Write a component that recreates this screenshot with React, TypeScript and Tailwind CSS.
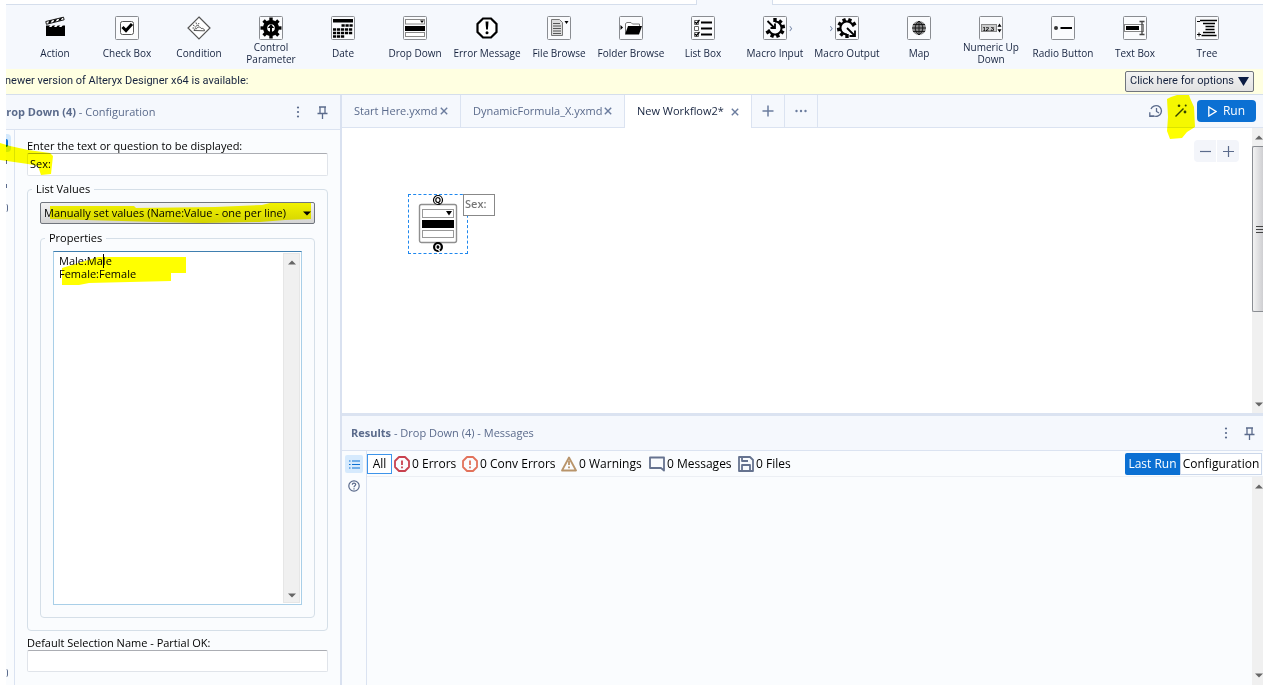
import React, { useState } from 'react';

const boxed = <rect x="0.5" y="0.5" width="23" height="23" rx="1" fill="#fafbfd" stroke="#8a8d92" />;

const teeth = (angles: number[], inner: number, outer: number) => angles.map(a => (
  <rect key={a} x={-1.7} y={-outer} width={3.4} height={outer - inner} transform={`translate(12 12) rotate(${a})`} fill="#000" />
));

const toolIcons: Record<string, React.ReactNode> = {
  action: <g>
      <path d="M3 11h19v9H3z" fill="#000" />
      <path d="M3 9.5h19v2H3z" fill="#000" />
      <path d="M2.8 5.5 20.5 1.2l.6 2.6L3.4 8.3z" fill="#fff" stroke="#000" strokeWidth="0.9" />
      <path d="m5 7.6 1.4-2.9 2.6-.6-1.4 2.8zM10 6.4l1.5-2.9 2.5-.6-1.4 2.8zM15.2 5.1l1.4-2.8 2.5-.6-1.4 2.8z" fill="#000" />
      <path d="m6 11 1.5-2h2.4l-1.5 2zm5 0 1.5-2h2.4l-1.5 2zm5 0 1.5-2h2.4l-1.5 2z" fill="#fff" />
    </g>,
  checkBox: <g>{boxed}<rect x="5.5" y="5.5" width="13" height="13" rx="2" fill="#fff" stroke="#555" /><path d="m7.5 11 3.500 3.500L17 8" fill="none" stroke="#000" strokeWidth="3" /></g>,
  condition: <g fill="none" stroke="#555">
      <path d="M12 1 23 12 12 23 1 12z" fill="#fff" strokeWidth="1.2" />
      <path d="M7 14.5c0-1.7 1.8-2 2.5-1.7.5-2.2 4-2.4 4.8-.3 2-.5 3.2.8 3.2 2.3z" />
      <path d="M8.5 11.5a2.4 2.4 0 0 1 3.3-2M6 9l1.5 1M9 6.5l.5 1.7M5.5 12h1.7M12 7l-.7 1.3" />
    </g>,
  control: <g>{boxed}{teeth([0, 45, 90, 135, 180, 225, 270, 315], 5, 10.5)}<circle cx="12" cy="12" r="8" fill="#000" /><circle cx="12" cy="12" r="3.8" fill="#fff" /><path d="m12 8-3.2 4h2.2v5h2v-5h2.2z" fill="#000" /></g>,
  date: <g>{boxed}<path d="M2 3h20v3.5H2z" fill="#000" /><path d="M10.5 9.5H22M2 13.5h20M2 17h20M2 20.500h12" stroke="#000" strokeWidth="2.6" strokeDasharray="3.2 0.8" /></g>,
  dropDown: <g>{boxed}<rect x="2.5" y="3.5" width="19" height="4.5" fill="#fff" stroke="#888" /><path d="M17 4.5h4L19 7z" /><path d="M2 10h20v5H2z" /><rect x="2.5" y="16.5" width="19" height="4" fill="#fff" stroke="#888" /></g>,
  error: <g><path d="M8 2.5h8L21.500 8v8L16 21.500H8L2.5 16V8z" fill="#fff" stroke="#000" strokeWidth="2.2" /><path d="M10.5 5.5h3l-.6 8h-1.8z" /><circle cx="12" cy="16.7" r="1.5" /></g>,
  fileBrowse: <g>{boxed}<path d="M4.5 3.5h8l3 3v13h-11z" fill="#ddd" stroke="#777" /><path d="M6 7.5h7M6 10h8M6 12.5h8M6 15h8M6 17.5h8" stroke="#555" /><path d="M17.5 5h4l-2 3z" /></g>,
  folderBrowse: <g>{boxed}<path d="M1.500 9v5L4 11.500z" /><path d="M6.5 17.5v-10l1.500-1h4L13.500 8h7v3" fill="#fff" stroke="#777" /><path d="M9 10h14l-3 8.500H6z" /></g>,
  listBox: <g>{boxed}<path d="M10 6.5h11M10 12.5h11M10 18.5h11" stroke="#000" strokeWidth="2" /><path d="M3.5 4.5h4v4h-4zM3.5 10.5h4v4h-4zM3.5 16.5h4v4h-4z" fill="#fff" stroke="#666" /><path d="m4 6 1.500 1.500L8.500 4M4 18l1.500 1.500L8.500 16" fill="none" stroke="#000" strokeWidth="1.2" /></g>,
  macroInput: <g>{boxed}{teeth([0, 40, 80, 120, 160, 200, 240], 6, 10)}<path d="M12 5.500a6.500 6.500 0 1 1-6.300 8" fill="none" stroke="#000" strokeWidth="2" /><path d="m4.500 5 7 7M12 7.500V12H7.500" fill="none" stroke="#000" strokeWidth="1.8" /></g>,
  macroOutput: <g>{boxed}{teeth([180, 220, 260, 300, 340, 20, 60], 6, 10)}<path d="M12 18.500a6.500 6.500 0 1 1 6.300-8" fill="none" stroke="#000" strokeWidth="2" /><path d="m12 12 7.500 7.500M20 14.500V20h-5.500" fill="none" stroke="#000" strokeWidth="1.8" /></g>,
  map: <g>{boxed}<circle cx="12" cy="12" r="7" fill="#888" /><path d="M12 5v14M5 12h14M6 8.500h12M6 15.500h12M12 5c-5 4-5 10 0 14M12 5c5 4 5 10 0 14" fill="none" stroke="#111" strokeWidth="0.9" /></g>,
  numeric: <g>{boxed}<rect x="2.5" y="8.5" width="15" height="7" fill="#ccc" stroke="#888" /><text x="3.5" y="14.5" fontSize="6" fontWeight="700" fontFamily="Liberation Sans, sans-serif">12.3</text><path d="m20.500 7.500-2 3.200h4zM20.500 16.500l-2-3.200h4z" /></g>,
  radio: <g>{boxed}<circle cx="5" cy="12" r="2" fill="#333" /><path d="M9.500 12H21" stroke="#000" strokeWidth="2" /></g>,
  textBox: <g>{boxed}<rect x="1.5" y="8.5" width="19" height="7" fill="#fff" stroke="#888" /><path d="M3 10h13v4H3z" /><path d="M16.500 5.500h5M16.500 18.500h5M19 5.500v13" stroke="#444" strokeWidth="1.3" /></g>,
  tree: <g>{boxed}<path d="M2 5.500h3M2 18.500h4M4 16.500v4" stroke="#000" /><path d="M5 4.500h17M8 7.500h12M10.500 10.500h9M10.500 13.500h9M8 16.500h12M6.500 19.500h15" stroke="#000" strokeWidth="1.6" /></g>
};

const tools = [
  { icon: 'action', label: 'Action' },
  { icon: 'checkBox', label: 'Check Box' },
  { icon: 'condition', label: 'Condition' },
  { icon: 'control', label: 'Control Parameter' },
  { icon: 'date', label: 'Date' },
  { icon: 'dropDown', label: 'Drop Down' },
  { icon: 'error', label: 'Error Message' },
  { icon: 'fileBrowse', label: 'File Browse' },
  { icon: 'folderBrowse', label: 'Folder Browse' },
  { icon: 'listBox', label: 'List Box' },
  { icon: 'macroInput', label: 'Macro Input' },
  { icon: 'macroOutput', label: 'Macro Output' },
  { icon: 'map', label: 'Map' },
  { icon: 'numeric', label: 'Numeric Up Down' },
  { icon: 'radio', label: 'Radio Button' },
  { icon: 'textBox', label: 'Text Box' },
  { icon: 'tree', label: 'Tree' }
];

const PinIcon = () => <svg width="11" height="13" viewBox="0 0 11 13" fill="none" stroke="#5b6b8c" strokeWidth="1.3">
    <path d="M2 1h7M3 1v6M8 1v6M.5 7.5h10M5.500 7.500V13" />
  </svg>;

const DotsIcon = () => <svg width="4" height="12" viewBox="0 0 4 12" fill="#5b6b8c">
    <circle cx="2" cy="1.5" r="1.1" /><circle cx="2" cy="6" r="1.1" /><circle cx="2" cy="10.5" r="1.1" />
  </svg>;

const CloseIcon = () => <svg width="8" height="8" viewBox="0 0 8 8" stroke="#6b7c9e" strokeWidth="1.4"><path d="m.8.8 6.400 6.400M7.200.8.8 7.200" /></svg>;

const Arrow = ({ down }: { down?: boolean }) => <svg width="8" height="5" viewBox="0 0 8 5" className="shrink-0" fill="#666">
    <path d={down ? 'M0 .5h8l-4 4z' : 'M0 4.500h8l-4-4z'} />
  </svg>;

const Toolbar = () => <div className="flex h-[64px] shrink-0 bg-[#f5f8fd] pt-[11px] pl-[13px]">
    {tools.map(tool => <button key={tool.icon} type="button" className="flex w-[72px] shrink-0 flex-col items-center">
        <span className="relative">
          <svg width="24" height="24" viewBox="0 0 24 24">{toolIcons[tool.icon]}</svg>
          {tool.icon === 'macroInput' && <span className="absolute top-1 left-[26px] text-[12px] leading-4 text-[#7a8bab]">›</span>}
          {tool.icon === 'macroOutput' && <span className="absolute top-1 right-[26px] text-[12px] leading-4 text-[#7a8bab]">›</span>}
        </span>
        <span className="flex h-[25px] items-center text-center text-[10px] leading-3 text-[#16233f]">
          <span className={tool.label.length > 14 ? 'w-[60px]' : 'whitespace-nowrap'}>{tool.label}</span>
        </span>
      </button>)}
  </div>;

const ConfigPanel = () => {
  const [question, setQuestion] = useState('Sex:');
  const [values, setValues] = useState('Male:Male\nFemale:Female');
  const [selection, setSelection] = useState('');

  return <section className="flex w-[336px] shrink-0 flex-col border-r-2 border-[#d9e1f0] bg-[#fafcfe]">
      <header className="flex h-[35px] shrink-0 items-center overflow-hidden border-b border-[#dbe3f1] bg-[#f5f8fd] pr-3 text-[11px] text-[#5b6b8c]">
        <h2 className="-ml-2 flex-1 whitespace-nowrap"><b>Drop Down (4)</b> - Configuration</h2>
        <button type="button" aria-label="More" className="mr-[17px]"><DotsIcon /></button>
        <button type="button" aria-label="Pin"><PinIcon /></button>
      </header>
      <div className="flex min-h-0 flex-1">
        <nav className="flex w-[9px] shrink-0 flex-col overflow-hidden border-r border-[#dbe3f1] pt-1 text-[#5b6b8c]">
          <span className="flex h-[18px] w-[5px] items-center rounded-r bg-[#d3e8fc]"><span className="h-2 w-[2px] rounded-r bg-[#0b70d3]" /></span>
          <span className="mt-2 h-1 w-px bg-[#5b6b8c]" />
          <span className="mt-5 h-1 w-px bg-[#5b6b8c]" />
          <span className="mt-4 h-2 w-[2px] rounded-r border-r border-[#5b6b8c]" />
          <span className="mt-auto mb-2 h-2 w-[2px] rounded-r border-r border-[#5b6b8c]" />
        </nav>
        <form className="flex min-w-0 flex-1 flex-col px-3 pt-2 pb-[13px] text-[11px] text-black">
          <label htmlFor="question" className="h-[15px] leading-4">Enter the text or question to be displayed:</label>
          <input id="question" value={question} onChange={e => setQuestion(e.target.value)} className="h-[23px] w-full rounded-xs border border-[#e0e4ea] border-t-[#abadb3] bg-white px-[2px] pb-[2px] outline-none" />
          <fieldset className="mt-[5px] flex min-h-0 flex-1 flex-col rounded border border-[#d5dfe8] px-3 pt-[5px] pb-3">
            <legend className="-ml-2 px-1 leading-4">List Values</legend>
            <div className="relative">
              <select aria-label="List Values" className="block h-[22px] w-full appearance-none rounded-xs border border-[#70757d] bg-linear-to-b from-[#f2f2f2] to-[#d4d4d4] px-[3px] outline-none">
                <option>Manually set values (Name:Value - one per line)</option>
              </select>
              <svg width="8" height="5" viewBox="0 0 8 5" className="pointer-events-none absolute top-[9px] right-1"><path d="M0 .5h8l-4 4z" /></svg>
            </div>
            <fieldset className="mt-1.5 flex min-h-0 flex-1 flex-col rounded border border-[#d5dfe8] px-3 pt-[5px] pb-3">
              <legend className="-ml-2 px-1 leading-4">Properties</legend>
              <div className="relative flex min-h-0 flex-1 border border-[#a9cfe8] border-t-[#3f7fb0] bg-white">
                <textarea aria-label="Properties" value={values} onChange={e => setValues(e.target.value)} className="min-w-0 flex-1 resize-none overflow-hidden px-[5px] pt-[2px] leading-[13px] outline-none" />
                <div className="my-px mr-px flex w-[17px] flex-col items-center justify-between border border-[#e6e6e6] bg-[#f0f0f0] pt-[6px] pb-1">
                  <Arrow />
                  <Arrow down />
                </div>
                <span className="absolute top-[2px] left-[49px] h-[14px] w-px bg-black" />
              </div>
            </fieldset>
          </fieldset>
          <label htmlFor="selection" className="mt-1 h-[15px] leading-4">Default Selection Name - Partial OK:</label>
          <input id="selection" value={selection} onChange={e => setSelection(e.target.value)} className="h-[22px] w-full rounded-xs border border-[#e0e4ea] border-t-[#abadb3] bg-white px-[2px] outline-none" />
        </form>
      </div>
    </section>;
};

const TabBar = () => <div className="flex h-[33px] shrink-0 text-[11px] text-[#5b6b8c]">
    <button type="button" className="flex w-[119px] items-center justify-between border-r border-b border-[#dbe3f1] px-3 whitespace-nowrap">Start Here.yxmd<CloseIcon /></button>
    <button type="button" className="flex w-[164px] items-center justify-between border-r border-b border-[#dbe3f1] px-3 whitespace-nowrap">DynamicFormula_X.yxmd<CloseIcon /></button>
    <button type="button" className="flex w-[127px] items-center justify-between border-r border-[#dbe3f1] bg-white px-3 whitespace-nowrap text-[#16233f]">New Workflow2*<CloseIcon /></button>
    <button type="button" aria-label="New tab" className="flex w-[33px] items-center justify-center border-r border-b border-[#dbe3f1]">
      <svg width="12" height="12" viewBox="0 0 12 12" stroke="#6b7c9e" strokeWidth="1.5"><path d="M6 .5v11M.5 6h11" /></svg>
    </button>
    <button type="button" aria-label="More tabs" className="flex w-[33px] items-center justify-center border-r border-b border-[#dbe3f1]">
      <svg width="12" height="4" viewBox="0 0 12 4" fill="#6b7c9e"><circle cx="1.5" cy="2" r="1.2" /><circle cx="6" cy="2" r="1.2" /><circle cx="10.5" cy="2" r="1.2" /></svg>
    </button>
    <div className="flex flex-1 items-center justify-end border-b border-[#dbe3f1] pr-[7px]">
      <button type="button" aria-label="History" className="mr-[11px]">
        <svg width="14" height="14" viewBox="0 0 14 14" fill="none" stroke="#5b6b8c" strokeWidth="1.3"><path d="M2 5A5.400 5.400 0 1 1 5 12M.8 8.300v4h4M5 12 .8 12M7.500 4v3.500l2.500 1.500" /></svg>
      </button>
      <button type="button" aria-label="Interface designer" className="mr-[9px]">
        <svg width="14" height="14" viewBox="0 0 14 14" fill="#34436b"><path d="m1 12 8-8 1 1-8 8z" /><circle cx="5" cy="1.8" r="1.3" /><circle cx="11.700" cy="1.500" r="1" /><circle cx="11" cy="8" r="1.400" /></svg>
      </button>
      <button type="button" className="flex h-[22px] w-[59px] items-center justify-center gap-[6px] rounded bg-[#0b70d3] text-[12px] text-white">
        <svg width="9" height="11" viewBox="0 0 9 11" fill="none" stroke="#fff" strokeWidth="1.3"><path d="M.8 1v9L8 5.500z" /></svg>
        Run
      </button>
    </div>
  </div>;

const Canvas = () => <div className="relative flex min-h-0 overflow-hidden bg-white">
    <div className="absolute top-[66px] left-[66px] flex h-[60px] w-[60px] justify-center border border-dashed border-[#1e87ee]">
      <svg width="40" height="60" viewBox="0 0 40 60" className="-mt-px">
        <rect x="1.5" y="10.5" width="37" height="38" rx="2" fill="#fff" stroke="#8f8f8f" strokeWidth="1.4" />
        <rect x="4.5" y="15.5" width="31" height="8" fill="#fff" stroke="#999" />
        <path d="M28 17h6l-3 4.500z" />
        <path d="M4 26h32v8H4z" />
        <rect x="4.5" y="36.5" width="31" height="7" fill="#fff" stroke="#999" />
        <circle cx="20" cy="6" r="4.500" fill="#fff" stroke="#000" strokeWidth="1.2" />
        <circle cx="20" cy="53" r="5" />
        <text x="20" y="9" fontSize="8" fontWeight="700" textAnchor="middle">Q</text>
        <text x="20" y="56" fontSize="8" fontWeight="700" textAnchor="middle" fill="#fff">Q</text>
      </svg>
    </div>
    <span className="absolute top-[66px] left-[121px] h-[22px] w-[32px] border border-[#888] bg-white px-px text-[11px] leading-[18px] font-semibold text-[#777]">Sex:</span>
    <div className="absolute top-3 right-6 flex h-[22px] gap-px">
      <button type="button" aria-label="Zoom out" className="flex w-[22px] items-center justify-center rounded-l bg-[#f3f5fa]">
        <svg width="11" height="11" viewBox="0 0 11 11" stroke="#5b6b8c" strokeWidth="1.2"><path d="M0 5.500h11" /></svg>
      </button>
      <button type="button" aria-label="Zoom in" className="flex w-[22px] items-center justify-center rounded-r bg-[#f3f5fa]">
        <svg width="11" height="11" viewBox="0 0 11 11" stroke="#5b6b8c" strokeWidth="1.2"><path d="M0 5.500h11M5.500 0v11" /></svg>
      </button>
    </div>
    <div className="ml-auto flex w-[11px] flex-col items-end bg-[#f0f0f0] pt-[7px] pb-[6px]">
      <Arrow />
      <div className="mt-[6px] flex h-[166px] w-full items-center justify-end rounded-l-xs border border-r-0 border-[#8a8d92] bg-linear-to-r from-[#f3f3f3] to-[#cfcfd2]">
        <svg width="7" height="9" viewBox="0 0 7 9" stroke="#444"><path d="M0 1.500h7M0 4.500h7M0 7.500h7" /></svg>
      </div>
      <div className="mt-auto flex"><Arrow down /></div>
    </div>
  </div>;

const octagon = 'M5 1h6l4 4v6l-4 4H5l-4-4V5z';

const filters = [
  { label: '0 Errors', color: '#c8414f', path: octagon, bang: true, width: 'w-[68px]' },
  { label: '0 Conv Errors', color: '#e2725b', path: octagon, bang: true, width: 'w-[99px]' },
  { label: '0 Warnings', color: '#b8946a', path: 'M8 1.500 15 14.500H1z', bang: true, width: 'w-[88px]' },
  { label: '0 Messages', color: '#66738f', path: 'M1 1.500h14v13L12 12H1z', bang: false, width: 'w-[89px]' },
  { label: '0 Files', color: '#66738f', path: 'M1 1h11l3 3v11H1zM4 15V9h8v6M4 1v4h6', bang: false, width: 'w-[60px]' }
];

const Results = () => <section className="flex min-h-0 flex-col bg-[#fafcfe]">
    <header className="flex h-[35px] shrink-0 items-center border-b border-[#dbe3f1] bg-[#f5f8fd] pr-2 pl-[9px] text-[11px] text-[#5b6b8c]">
      <h2 className="flex-1"><b>Results</b> - Drop Down (4) - Messages</h2>
      <button type="button" aria-label="More" className="mr-4"><DotsIcon /></button>
      <button type="button" aria-label="Pin"><PinIcon /></button>
    </header>
    <div className="flex min-h-0 flex-1">
      <nav className="flex w-[25px] shrink-0 flex-col items-center gap-[7px] border-r border-[#dbe3f1] pt-1">
        <button type="button" aria-label="Messages" className="flex h-[18px] w-[18px] items-center justify-center rounded-xs bg-[#d6eafd]">
          <svg width="11" height="9" viewBox="0 0 11 9" stroke="#0b70d3"><path d="M0 1h1.500M3 1h8M0 4.500h1.500M3 4.500h8M0 8h1.500M3 8h8" /></svg>
        </button>
        <button type="button" aria-label="Help">
          <svg width="12" height="12" viewBox="0 0 12 12" fill="none" stroke="#5b6b8c" strokeWidth="1.2"><circle cx="6" cy="6" r="5.2" /><path d="M4.300 4.800c0-2.300 3.400-2.200 3.400-.2C7.700 5.800 6 5.800 6 7.200M6 8.200v1.200" /></svg>
        </button>
      </nav>
      <div className="flex min-w-0 flex-1 flex-col">
        <div className="flex h-[26px] shrink-0 items-center border-b border-[#eceff4] pr-px text-[12px] text-black">
          <button type="button" className="h-5 w-[25px] border border-[#3d94ea] bg-white leading-4">All</button>
          <div className="flex flex-1 pl-[2px]">
            {filters.map(f => <button key={f.label} type="button" className={`flex items-center gap-[2px] whitespace-nowrap ${f.width}`}>
                <svg width="16" height="16" viewBox="0 0 16 16" fill="none" stroke={f.color} strokeWidth="1.8" className="shrink-0">
                  <path d={f.path} strokeLinejoin="round" />
                  {f.bang && <path d="M8 4.500V9M8 10.500v1.700" />}
                </svg>
                {f.label}
              </button>)}
          </div>
          <button type="button" className="h-[22px] w-[55px] rounded-l-xs bg-[#0b70d3] whitespace-nowrap text-white">Last Run</button>
          <button type="button" className="flex h-[22px] w-[82px] items-center justify-center border border-[#cbd7ea] bg-white">Configuration</button>
        </div>
        <div className="flex min-h-0 flex-1 justify-end">
          <div className="flex w-[11px] flex-col items-end justify-between overflow-hidden bg-[#f0f0f0] py-[7px]">
            <Arrow />
            <Arrow down />
          </div>
        </div>
      </div>
    </div>
  </section>;

// Highlighter strokes drawn over the finished page
const Markers = () => <>
    <svg className="pointer-events-none absolute top-0 left-0 mix-blend-multiply" width="320" height="300" viewBox="0 0 320 300" fill="#ffff00">
      <path d="M0 143 10 146 28 150 50 153 53 156 51 174 41 175 38 166 28 164 0 160z" />
      <path d="M50 206 134 206 136 208 215 207 262 205 270 203 311 203 311 219 285 220 260 222 203 223 157 222 50 219z" />
      <path d="M98 257h88v16h-15v8l-82 2-10 2H62v-17z" />
    </svg>
    <svg className="pointer-events-none absolute top-[94px] right-[67px] mix-blend-multiply" width="30" height="46" viewBox="0 0 30 46" fill="#ffff00">
      <path d="M11 1h12l1 3 4 9 1 20-8 5-5 6-12 1-3-8 1-14-1-18 4-2z" />
    </svg>
  </>;

const App = () => {
  return <div className="relative flex h-screen flex-col overflow-hidden bg-white pb-px pl-1.5 font-['Open_Sans','Noto_Sans',sans-serif]">
      <div className="flex h-[5px] shrink-0">
        <div className="w-[690px] border-b border-[#d5deec]" />
        <div className="w-[77px] border-x border-[#d5deec] bg-[#f5f8fd]" />
        <div className="flex-1 border-b border-[#d5deec]" />
      </div>
      <Toolbar />
      <div className="flex h-[26px] shrink-0 items-center justify-between overflow-hidden border-b border-[#d5deec] bg-[#ffffe1] pr-[9px] font-['Roboto',sans-serif] text-[11px] text-[#16233f]">
        <span className="-ml-px">newer version of Alteryx Designer x64 is available:</span>
        <button type="button" className="flex h-[21px] w-[129px] items-center justify-center gap-1 rounded-xs border border-[#70757d] bg-linear-to-b from-[#f3f3f3] to-[#e2e2e2] whitespace-nowrap">
          Click here for options
          <svg width="11" height="9" viewBox="0 0 11 9" fill="#0b1c44"><path d="M0 0h11L5.500 9z" /></svg>
        </button>
      </div>
      <div className="flex min-h-0 flex-1">
        <ConfigPanel />
        <main className="grid min-w-0 flex-1 grid-rows-[33px_285fr_3px_269fr] bg-[#f5f8fd]">
          <TabBar />
          <Canvas />
          <div className="bg-[#dbe3f1]" />
          <Results />
        </main>
      </div>
      <Markers />
    </div>;
};

export default App;
